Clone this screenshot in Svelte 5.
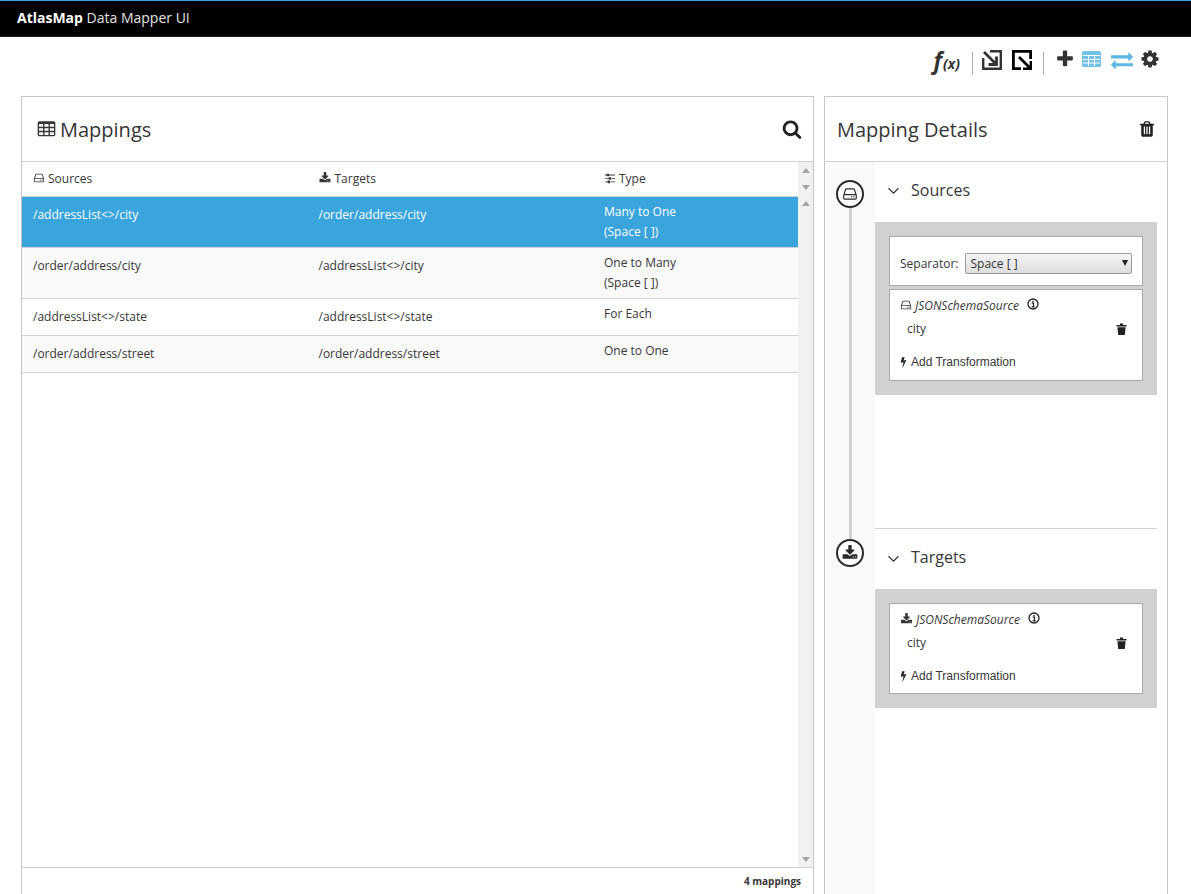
<script lang="ts">
  const rows = [
    { source: '/addressList<>/city', target: '/order/address/city', type: ['Many to One', '(Space [ ])'], selected: true },
    { source: '/order/address/city', target: '/addressList<>/city', type: ['One to Many', '(Space [ ])'] },
    { source: '/addressList<>/state', target: '/addressList<>/state', type: ['For Each'] },
    { source: '/order/address/street', target: '/order/address/street', type: ['One to One'] }
  ];

  // FontAwesome 4 outlines, 1792 units
  const icons = {
    table: 'M576 1376v-192q0-14-9-23t-23-9h-320q-14 0-23 9t-9 23v192q0 14 9 23t23 9h320q14 0 23-9t9-23zm0-384v-192q0-14-9-23t-23-9h-320q-14 0-23 9t-9 23v192q0 14 9 23t23 9h320q14 0 23-9t9-23zm512 384v-192q0-14-9-23t-23-9h-320q-14 0-23 9t-9 23v192q0 14 9 23t23 9h320q14 0 23-9t9-23zm-512-768v-192q0-14-9-23t-23-9h-320q-14 0-23 9t-9 23v192q0 14 9 23t23 9h320q14 0 23-9t9-23zm512 384v-192q0-14-9-23t-23-9h-320q-14 0-23 9t-9 23v192q0 14 9 23t23 9h320q14 0 23-9t9-23zm512 384v-192q0-14-9-23t-23-9h-320q-14 0-23 9t-9 23v192q0 14 9 23t23 9h320q14 0 23-9t9-23zm-512-768v-192q0-14-9-23t-23-9h-320q-14 0-23 9t-9 23v192q0 14 9 23t23 9h320q14 0 23-9t9-23zm512 384v-192q0-14-9-23t-23-9h-320q-14 0-23 9t-9 23v192q0 14 9 23t23 9h320q14 0 23-9t9-23zm0-384v-192q0-14-9-23t-23-9h-320q-14 0-23 9t-9 23v192q0 14 9 23t23 9h320q14 0 23-9t9-23zm128-320v1088q0 66-47 113t-113 47h-1344q-66 0-113-47t-47-113v-1088q0-66 47-113t113-47h1344q66 0 113 47t47 113z',
    search: 'M1216 832q0-185-131.5-316.5t-316.5-131.5-316.5 131.5-131.5 316.5 131.5 316.5 316.5 131.5 316.5-131.5 131.5-316.5zm512 832q0 52-38 90t-90 38q-54 0-90-38l-343-342q-179 124-399 124-143 0-273.5-55.5t-225-150-150-225-55.5-273.5 55.5-273.5 150-225 225-150 273.5-55.5 273.5 55.5 225 150 150 225 55.5 273.5q0 220-124 399l343 343q37 37 37 90z',
    plus: 'M1600 736v192q0 40-28 68t-68 28h-416v416q0 40-28 68t-68 28h-192q-40 0-68-28t-28-68v-416h-416q-40 0-68-28t-28-68v-192q0-40 28-68t68-28h416v-416q0-40 28-68t68-28h192q40 0 68 28t28 68v416h416q40 0 68 28t28 68z',
    cog: 'M1152 896q0-106-75-181t-181-75-181 75-75 181 75 181 181 75 181-75 75-181zm512-109v222q0 12-8 23t-20 13l-185 28q-19 54-39 91 35 50 107 138 10 12 10 25t-9 23q-27 37-99 108t-94 71q-12 0-26-9l-138-108q-44 23-91 38-16 136-29 186-7 28-36 28h-222q-14 0-24.5-8.5t-11.5-21.5l-28-184q-49-16-90-37l-141 107q-10 9-25 9-14 0-25-11-126-114-165-168-7-10-7-23 0-12 8-23 15-21 51-66.5t54-70.5q-27-50-41-99l-183-27q-13-2-21-12.5t-8-23.5v-222q0-12 8-23t19-13l186-28q14-46 39-92-40-57-107-138-10-12-10-24 0-10 9-23 26-36 98.5-107.5t94.5-71.5q13 0 26 10l138 107q44-23 91-38 16-136 29-186 7-28 36-28h222q14 0 24.5 8.5t11.5 21.5l28 184q49 16 90 37l142-107q9-9 24-9 13 0 25 10 129 119 165 170 7 8 7 22 0 12-8 23-15 21-51 66.5t-54 70.5q26 50 41 98l183 28q13 2 21 12.5t8 23.5z',
    exchange: 'M1792 1184v192q0 13-9.5 22.5t-22.5 9.5h-1376v192q0 13-9.5 22.5t-22.5 9.5q-12 0-24-10l-319-320q-9-9-9-22 0-14 9-23l320-320q9-9 23-9 13 0 22.5 9.5t9.5 22.5v192h1376q13 0 22.5 9.5t9.5 22.5zm0-544q0 14-9 23l-320 320q-9 9-23 9-13 0-22.5-9.5t-9.5-22.5v-192h-1376q-13 0-22.5-9.5t-9.5-22.5v-192q0-13 9.5-22.5t22.5-9.5h1376v-192q0-14 9-23t23-9q12 0 24 10l319 319q9 9 9 23z',
    trash: 'M704 1376v-704q0-14-9-23t-23-9h-64q-14 0-23 9t-9 23v704q0 14 9 23t23 9h64q14 0 23-9t9-23zm256 0v-704q0-14-9-23t-23-9h-64q-14 0-23 9t-9 23v704q0 14 9 23t23 9h64q14 0 23-9t9-23zm256 0v-704q0-14-9-23t-23-9h-64q-14 0-23 9t-9 23v704q0 14 9 23t23 9h64q14 0 23-9t9-23zm-544-992h448l-48-117q-7-9-17-11h-317q-10 2-17 11zm928 32v64q0 14-9 23t-23 9h-96v948q0 83-47 143.5t-113 60.5h-832q-66 0-113-58.5t-47-141.5v-952h-96q-14 0-23-9t-9-23v-64q0-14 9-23t23-9h309l70-167q15-37 54-63t79-26h320q40 0 79 26t54 63l70 167h309q14 0 23 9t9 23z',
    download: 'M1344 1344q0-26-19-45t-45-19-45 19-19 45 19 45 45 19 45-19 19-45zm256 0q0-26-19-45t-45-19-45 19-19 45 19 45 45 19 45-19 19-45zm128-224v320q0 40-28 68t-68 28h-1472q-40 0-68-28t-28-68v-320q0-40 28-68t68-28h465l135 136q58 56 136 56t136-56l136-136h464q40 0 68 28t28 68zm-325-569q17 41-14 70l-448 448q-18 19-45 19t-45-19l-448-448q-31-29-14-70 17-39 59-39h256v-448q0-26 19-45t45-19h256q26 0 45 19t19 45v448h256q42 0 59 39z',
    hdd: 'M1168 1216q0 33-23.5 56.5t-56.5 23.5-56.5-23.5-23.5-56.5 23.5-56.5 56.5-23.5 56.5 23.5 23.5 56.5zm256 0q0 33-23.5 56.5t-56.5 23.5-56.5-23.5-23.5-56.5 23.5-56.5 56.5-23.5 56.5 23.5 23.5 56.5zm112 160v-320q0-13-9.5-22.5t-22.5-9.5h-1216q-13 0-22.5 9.5t-9.5 22.5v320q0 13 9.5 22.5t22.5 9.5h1216q13 0 22.5-9.5t9.5-22.5zm-1230-480h1180l-157-482q-4-13-16-21.5t-26-8.5h-782q-14 0-26 8.5t-16 21.5zm1358 160v320q0 66-47 113t-113 47h-1216q-66 0-113-47t-47-113v-320q0-25 16-75l197-606q17-53 63-86t101-33h782q55 0 101 33t63 86l197 606q16 50 16 75z',
    sliders: 'M480 1408v128h-352v-128h352zm352-128q26 0 45 19t19 45v256q0 26-19 45t-45 19h-256q-26 0-45-19t-19-45v-256q0-26 19-45t45-19h256zm160-384v128h-864v-128h864zm-640-512v128h-224v-128h224zm1312 1024v128h-736v-128h736zm-960-1152q26 0 45 19t19 45v256q0 26-19 45t-45 19h-256q-26 0-45-19t-19-45v-256q0-26 19-45t45-19h256zm320 512q26 0 45 19t19 45v256q0 26-19 45t-45 19h-256q-26 0-45-19t-19-45v-256q0-26 19-45t45-19h256zm640 128v128h-480v-128h480zm0-512v128h-1056v-128h1056z',
    bolt: 'M1333 566q18 20 7 44l-540 1157q-13 25-42 25-4 0-14-2-17-5-25.5-19t-4.5-30l197-808-406 101q-4 1-12 1-18 0-31-11-18-15-13-39l201-825q4-14 16-23t28-9h328q19 0 32 12.5t13 29.5q0 8-5 18l-171 463 396-98q8-2 12-2 19 0 34 15z'
  };

  const cards = [
    { key: 'sources', title: 'Sources', icon: icons.hdd, hasSeparator: true },
    { key: 'targets', title: 'Targets', icon: icons.download, hasSeparator: false }
  ];
</script>

{#snippet fa(d: string, cls: string)}
  <svg class={cls} viewBox="0 0 1792 1792" fill="currentColor" aria-hidden="true"><path {d} /></svg>
{/snippet}

<div class="page">
  <header class="topbar"><strong>AtlasMap</strong> Data Mapper UI</header>

  <div class="toolbar">
    <span class="fx"><i class="fx-f">f</i><i class="fx-x">(x)</i></span>
    <span class="bar bar-a"></span>
    <svg class="io" viewBox="0 0 20 20" aria-hidden="true">
      <path d="M8 1.2H18.8V18.8H1.2V8" fill="none" stroke="#333" stroke-width="2.4" />
      <path d="M2 2 13 13M14.5 6.5V14.5H6.5" fill="none" stroke="#333" stroke-width="2.8" />
    </svg>
    <svg class="io io-export" viewBox="0 0 20 20" aria-hidden="true">
      <path d="M9 18.6H1.4V1.4H18.6V9" fill="none" stroke="#000" stroke-width="2.8" />
      <path d="M7 7 18 18M19 11V19H11" fill="none" stroke="#000" stroke-width="2.8" />
    </svg>
    <span class="bar bar-b"></span>
    {@render fa(icons.plus, 'tool tool-plus')}
    <svg class="tool-grid" viewBox="0 0 19 16" aria-hidden="true">
      <rect x="0" y="0" width="19" height="16" rx="1.5" fill="#74c3e7" />
      <path d="M1 4.5H18M1 8.5H18M1 12H18M6.5 4V15M12.5 4V15" stroke="#fff" stroke-width="1" fill="none" />
    </svg>
    {@render fa(icons.exchange, 'tool tool-exchange')}
    {@render fa(icons.cog, 'tool tool-cog')}
  </div>

  <main class="workspace">
    <section class="panel mappings">
      <div class="panel-head">
        <h2>{@render fa(icons.table, 'title-icon')}Mappings</h2>
        {@render fa(icons.search, 'search')}
      </div>

      <div class="thead-wrap">
        <div class="cols thead">
          <div>{@render fa(icons.hdd, 'th-icon')}Sources</div>
          <div>{@render fa(icons.download, 'th-icon')}Targets</div>
          <div>{@render fa(icons.sliders, 'th-icon')}Type</div>
        </div>
        <div class="scroll head-scroll">
          <span class="up"></span>
          <span class="down"></span>
        </div>
      </div>

      <div class="tbody-wrap">
        <div class="tbody">
          {#each rows as row, i}
            <div class="cols row" class:selected={row.selected} class:odd={i % 2 === 1}>
              <div class="cell">{row.source}</div>
              <div class="cell">{row.target}</div>
              <div class="cell type">
                {#each row.type as line}<div>{line}</div>{/each}
              </div>
            </div>
          {/each}
        </div>
        <div class="scroll body-scroll">
          <span class="up"></span>
          <span class="down"></span>
        </div>
      </div>

      <div class="count">4 mappings</div>
    </section>

    <section class="panel details">
      <div class="panel-head">
        <h2>Mapping Details</h2>
        {@render fa(icons.trash, 'head-trash')}
      </div>

      <div class="details-body">
        <div class="rail">
          <span class="node">{@render fa(icons.hdd, 'node-icon')}</span>
          <span class="rail-line"></span>
          <span class="node">{@render fa(icons.download, 'node-icon')}</span>
        </div>

        <div class="sections">
          {#each cards as sec}
            <div class="section {sec.key}">
              <div class="section-title">
                <svg class="chevron" viewBox="0 0 12 8" aria-hidden="true">
                  <path d="M1 1.2 6 6.2 11 1.2" fill="none" stroke="#363636" stroke-width="1.3" />
                </svg>
                {sec.title}
              </div>
              <div class="well">
                {#if sec.hasSeparator}
                  <div class="card sep-card">
                    <label for="separator">Separator:</label>
                    <div class="select-wrap">
                      <select id="separator"><option>Space [ ]</option></select>
                    </div>
                  </div>
                {/if}
                <div class="card field-card">
                  <div class="doc-line">
                    {@render fa(sec.icon, 'doc-icon')}
                    <em>JSONSchemaSource</em>
                    <svg class="info" viewBox="0 0 12 12" aria-hidden="true">
                      <circle cx="6" cy="6" r="5" fill="none" stroke="#222" stroke-width="1.3" />
                      <path d="M4.7 5.2H6.5V8.6M4.6 8.8H7.6" fill="none" stroke="#222" stroke-width="1.2" />
                      <rect x="5.3" y="2.8" width="1.4" height="1.4" fill="#222" />
                    </svg>
                  </div>
                  <div class="field-line">
                    <span>city</span>
                    <svg class="small-trash" viewBox="0 0 11 12" aria-hidden="true">
                      <path d="M0.5 2H4V0.6H7V2H10.5V3.4H0.5ZM1.4 4.2H9.6L8.8 12H2.2Z" fill="#222" />
                    </svg>
                  </div>
                  <div class="transform">
                    {@render fa(icons.bolt, 'bolt')}Add Transformation
                  </div>
                </div>
              </div>
            </div>
          {/each}
        </div>
      </div>
    </section>
  </main>
</div>

<style>
  :global(body) {
    margin: 0;
    overflow: hidden;
    background: #fff;
  }

  .page {
    height: 894px;
    overflow: hidden;
    font-family: "Open Sans", sans-serif;
    font-size: 12px;
    color: #363636;
  }

  .topbar {
    height: 35px;
    line-height: 34px;
    padding-left: 17px;
    background: #000;
    border-top: 1px solid #39a5dc;
    border-bottom: 1px solid #222;
    color: #e4e4e4;
    font-size: 14px;
  }

  .topbar strong {
    color: #fff;
  }

  .toolbar {
    height: 59px;
    display: flex;
    align-items: flex-start;
    justify-content: flex-end;
    padding-right: 31px;
    box-sizing: border-box;
  }

  .fx {
    margin-top: 9px;
    font-weight: 700;
    color: #333;
    white-space: nowrap;
    line-height: 28px;
  }

  .fx-f {
    font-size: 23px;
  }

  .fx-x {
    font-size: 14px;
    margin-left: 1px;
  }

  .bar {
    width: 1px;
    height: 23px;
    margin-top: 15px;
    background: #aaa;
  }

  .bar-a {
    margin-left: 12px;
    margin-right: 9px;
  }

  .bar-b {
    margin-left: 11px;
    margin-right: 11px;
  }

  .io {
    width: 20px;
    height: 20px;
    margin-top: 13px;
    flex: none;
  }

  .io-export {
    margin-left: 10px;
  }

  .toolbar :global(.tool) {
    flex: none;
  }

  .toolbar :global(.tool-plus) {
    width: 20px;
    height: 20px;
    margin-top: 12px;
    color: #333;
  }

  .tool-grid {
    width: 19px;
    height: 16px;
    margin: 14px 0 0 7px;
    flex: none;
  }

  .toolbar :global(.tool-exchange) {
    width: 22px;
    height: 22px;
    margin: 12px 0 0 10px;
    color: #5cb8e2;
  }

  .toolbar :global(.tool-cog) {
    width: 20px;
    height: 20px;
    margin: 12px 0 0 7px;
    color: #333;
  }

  .workspace {
    display: flex;
    gap: 10px;
    padding: 0 23px 0 21px;
    height: 840px;
  }

  .panel {
    border: 1px solid #c6c6c6;
    background: #fff;
    box-sizing: border-box;
  }

  .mappings {
    width: 793px;
    flex: none;
  }

  .details {
    width: 344px;
    flex: none;
  }

  .panel-head {
    height: 64px;
    border-bottom: 1px solid #d1d1d1;
    display: flex;
    align-items: center;
    justify-content: space-between;
    padding: 0 11px 0 12px;
  }

  .mappings .panel-head {
    padding: 0 11px 0 15px;
  }

  h2 {
    margin: 0;
    font-size: 20px;
    font-weight: 400;
    display: flex;
    align-items: center;
    color: #363636;
  }

  .panel-head :global(.title-icon) {
    width: 19px;
    height: 19px;
    margin-right: 4px;
  }

  .panel-head :global(.search) {
    width: 20px;
    height: 20px;
    color: #222;
  }

  .panel-head :global(.head-trash) {
    width: 18px;
    height: 18px;
    color: #222;
  }

  .thead-wrap,
  .tbody-wrap {
    display: flex;
  }

  .thead-wrap {
    height: 35px;
  }

  .cols {
    display: grid;
    grid-template-columns: 285.5px 285.5px 1fr;
    width: 776px;
    flex: none;
    box-sizing: border-box;
  }

  .thead {
    height: 35px;
    align-items: center;
    border-bottom: 1px solid #d1d1d1;
    padding-bottom: 2px;
  }

  .thead > div {
    padding-left: 11px;
    display: flex;
    align-items: center;
  }

  .thead :global(.th-icon) {
    width: 12px;
    height: 12px;
    margin-right: 3px;
  }

  .thead > div:nth-child(2) :global(.th-icon) {
    margin-right: 4px;
  }

  .scroll {
    width: 15px;
    flex: none;
    background: #f1f1f1;
    position: relative;
  }

  .up,
  .down {
    position: absolute;
    left: 3.5px;
    width: 0;
    height: 0;
    border-left: 4px solid transparent;
    border-right: 4px solid transparent;
  }

  .up {
    border-bottom: 5px solid #a3a3a3;
  }

  .down {
    border-top: 5px solid #a3a3a3;
  }

  .head-scroll .up {
    top: 6px;
  }

  .head-scroll .down {
    top: 23px;
  }

  .body-scroll .up {
    top: 4px;
  }

  .body-scroll .down {
    bottom: 5px;
  }

  .tbody-wrap {
    height: 670px;
  }

  .tbody {
    width: 776px;
    flex: none;
  }

  .row {
    border-bottom: 1px solid #d1d1d1;
  }

  .row.odd {
    background: #f9f9f9;
  }

  .row.selected {
    background: #39a5dc;
    color: #fff;
  }

  .cell {
    padding: 8px 11px;
    line-height: 20px;
  }

  .cell.type {
    padding: 5px 11px;
  }

  .count {
    height: 30px;
    border-top: 1px solid #d1d1d1;
    text-align: right;
    padding-right: 12px;
    line-height: 27px;
    font-size: 10px;
    font-weight: 700;
  }

  .details-body {
    display: flex;
  }

  .rail {
    width: 50px;
    height: 760px;
    flex: none;
    background: #f9f9f9;
    display: flex;
    flex-direction: column;
    align-items: center;
    padding-top: 18px;
    box-sizing: border-box;
  }

  .node {
    width: 28px;
    height: 28px;
    box-sizing: border-box;
    border: 2px solid #2b2b2b;
    border-radius: 50%;
    background: #fff;
    display: flex;
    align-items: center;
    justify-content: center;
    color: #2b2b2b;
    flex: none;
  }

  .node :global(.node-icon) {
    width: 16px;
    height: 16px;
  }

  .rail-line {
    width: 3px;
    height: 331px;
    background: #d1d1d1;
    flex: none;
  }

  .sections {
    width: 282px;
    flex: none;
  }

  .section.sources {
    height: 367px;
    border-bottom: 1px solid #d1d1d1;
    box-sizing: border-box;
  }

  .section-title {
    height: 60px;
    display: flex;
    align-items: center;
    font-size: 16px;
    padding-left: 12px;
    padding-bottom: 5px;
    box-sizing: border-box;
  }

  .targets .section-title {
    padding-bottom: 4px;
  }

  .chevron {
    width: 13px;
    height: 8px;
    margin-right: 11px;
    margin-top: 3px;
  }

  .well {
    background: #d1d1d1;
    padding: 14px;
    display: flex;
    flex-direction: column;
    gap: 3px;
  }

  .card {
    background: #fff;
    border: 1px solid #a8a8a8;
    box-sizing: border-box;
  }

  .sep-card {
    height: 50px;
    display: flex;
    align-items: center;
    padding: 4px 10px 0;
  }

  .sep-card label {
    margin-right: 7px;
    white-space: nowrap;
  }

  .select-wrap {
    position: relative;
    flex: 1;
  }

  .select-wrap::after {
    content: '';
    position: absolute;
    right: 4px;
    top: 7px;
    border-left: 3.5px solid transparent;
    border-right: 3.5px solid transparent;
    border-top: 6px solid #222;
  }

  select {
    appearance: none;
    width: 100%;
    height: 21px;
    display: block;
    padding: 0 4px;
    font: inherit;
    color: #363636;
    border: 1px solid #999;
    border-radius: 2px;
    background: linear-gradient(#f5f5f5, #dedede);
  }

  .field-card {
    padding: 0 10px;
    height: 92px;
  }

  .targets .field-card {
    height: 91px;
  }

  .doc-line {
    display: flex;
    align-items: center;
    height: 20px;
    margin-top: 5px;
  }

  .doc-line :global(.doc-icon) {
    width: 12px;
    height: 12px;
    margin-right: 3px;
  }

  .targets .doc-line :global(.doc-icon) {
    width: 13px;
  }

  .doc-line em {
    margin-right: 8px;
  }

  .info {
    width: 12px;
    height: 12px;
    margin-top: -2px;
  }

  .field-line {
    display: flex;
    justify-content: space-between;
    padding: 5px 5px 0 7px;
    height: 30px;
    box-sizing: border-box;
  }

  .small-trash {
    width: 11px;
    height: 12px;
    margin-top: 3px;
  }

  .transform {
    display: flex;
    align-items: center;
    font-family: "Liberation Sans", sans-serif;
    margin-top: 10px;
    margin-left: -2px;
  }

  .transform :global(.bolt) {
    width: 11px;
    height: 12px;
    margin-right: 2px;
    color: #222;
  }
</style>
